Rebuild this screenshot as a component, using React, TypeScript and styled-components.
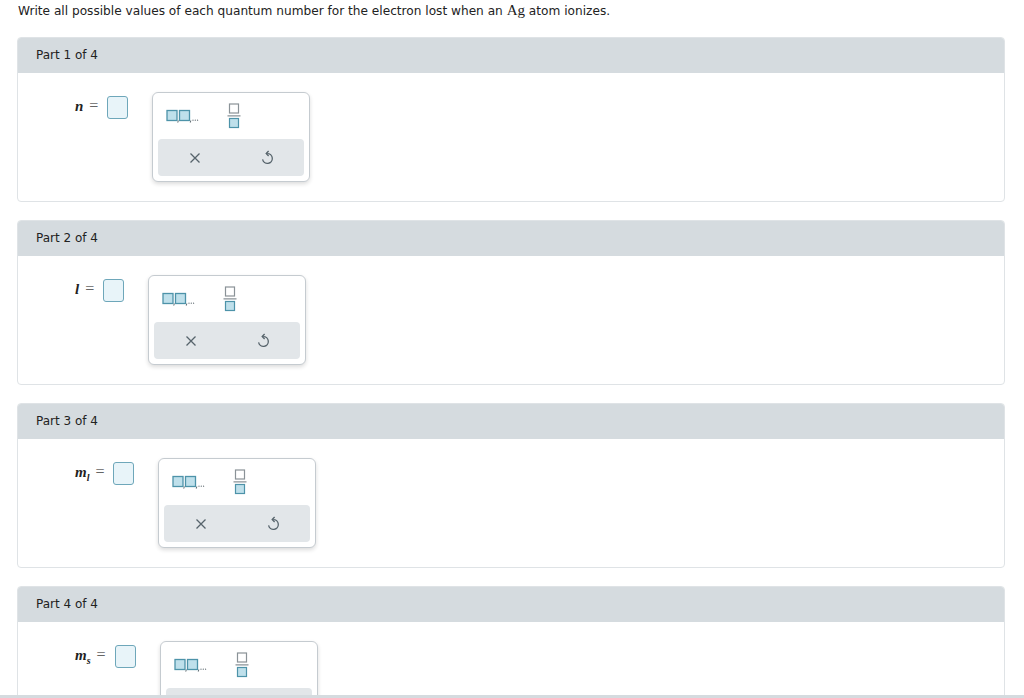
import styled, { createGlobalStyle } from "styled-components"

const GlobalStyle = createGlobalStyle`
  *, *::before, *::after {
    box-sizing: border-box;
  }
  body {
    margin: 0;
    background: #fff;
    font-family: "DejaVu Sans", Verdana, sans-serif;
    color: #333;
  }
`

const Page = styled.div`
  padding: 0 19px 0 17px;
`

const Prompt = styled.p`
  margin: 0;
  padding: 2px 0 0 1px;
  font-size: 12.15px;
  line-height: 16px;
  color: #222;
`

const Ag = styled.span`
  font-family: "Liberation Serif", "Times New Roman", serif;
  font-size: 15px;
`

const PartList = styled.div`
  display: flex;
  flex-direction: column;
  gap: 18px;
  margin-top: 18px;
`

const Card = styled.section`
  border: 1px solid #dfe3e6;
  border-radius: 4px;
  overflow: hidden;
`

const CardHeader = styled.div`
  height: 35px;
  background: #d5dbdf;
  display: flex;
  align-items: center;
  padding: 0 0 1px 18px;
  font-size: 12px;
  color: #222;
`

const CardBody = styled.div`
  height: 128px;
  padding: 19px 0 0 57px;
  display: flex;
  align-items: flex-start;
`

const Label = styled.span`
  display: flex;
  align-items: baseline;
  margin-top: 5px;
  font-family: "Liberation Serif", "Times New Roman", serif;
  font-size: 15px;
  color: #222;
`

const Var = styled.i`
  font-weight: bold;
  font-size: 15px;
`

const Sub = styled.i`
  font-size: 10px;
  font-weight: bold;
  position: relative;
  top: 4px;
`

const Eq = styled.span`
  margin: 0 9px 0 6px;
  color: #666;
  font-size: 16px;
`

const AnswerBox = styled.div`
  width: 21px;
  height: 23px;
  margin-top: 4px;
  border: 1.5px solid #6ea7ba;
  border-radius: 3px;
  background: #e8f4f9;
`

const Keypad = styled.div`
  width: 158px;
  height: 90px;
  margin-left: 24px;
  padding: 5px;
  border: 1px solid #c5cbd0;
  border-radius: 6px;
  box-shadow: 0 2px 4px rgba(0, 0, 0, 0.14);
  display: flex;
  flex-direction: column;
  background: #fff;
`

const KeyRow = styled.div`
  height: 41px;
  padding-bottom: 6px;
  display: grid;
  grid-template-columns: 50px 52px 1fr;
  align-items: center;
  justify-items: center;
`

const ActionRow = styled.div`
  flex: 1;
  background: #e2e6e9;
  border-radius: 4px;
  display: grid;
  grid-template-columns: 1fr 1fr;
  align-items: center;
  justify-items: center;
`

const ListIcon = () => (
  <svg width="34" height="14" viewBox="0 0 34 14">
    <rect x="1" y="1.5" width="10" height="10" fill="#bfe0eb" stroke="#4d93a9" strokeWidth="1.3" />
    <rect x="13.5" y="1.5" width="10" height="10" fill="#bfe0eb" stroke="#4d93a9" strokeWidth="1.3" />
    <path d="M12.3 11.5 L11.8 13.6 M24.8 11.5 L24.3 13.6" stroke="#4d5a62" strokeWidth="0.9" />
    <circle cx="27" cy="11.2" r="0.6" fill="#5a666d" />
    <circle cx="29.3" cy="11.2" r="0.6" fill="#5a666d" />
    <circle cx="31.6" cy="11.2" r="0.6" fill="#5a666d" />
  </svg>
)

const FracIcon = () => (
  <svg width="14" height="26" viewBox="0 0 14 26">
    <rect x="2.5" y="1" width="9" height="9" fill="#fff" stroke="#8a9297" strokeWidth="1.2" />
    <line x1="0.5" y1="12.8" x2="13.5" y2="12.8" stroke="#8a9297" strokeWidth="1.2" />
    <rect x="2.5" y="15.5" width="9" height="9" fill="#bfe0eb" stroke="#4d93a9" strokeWidth="1.2" />
  </svg>
)

const ClearIcon = () => (
  <svg width="12" height="12" viewBox="0 0 12 12">
    <path d="M1.5 1.5 L10.5 10.5 M10.5 1.5 L1.5 10.5" stroke="#56636b" strokeWidth="1.3" />
  </svg>
)

const UndoIcon = () => (
  <svg width="13" height="15" viewBox="0 0 13 15">
    <path d="M6.2 3.6 A4.9 4.9 0 1 1 1.6 9.4" fill="none" stroke="#56636b" strokeWidth="1.3" />
    <path d="M7.6 1 L5.2 3.6 L7.6 6" fill="none" stroke="#56636b" strokeWidth="1.3" />
  </svg>
)

const FooterLine = styled.div`
  position: fixed;
  left: 0;
  right: 0;
  bottom: 0;
  height: 3px;
  background: #d5dbdf;
`

const parts = [
  { v: "n", sub: "" },
  { v: "l", sub: "" },
  { v: "m", sub: "l" },
  { v: "m", sub: "s" },
]

export default function App() {
  return (
    <Page>
      <GlobalStyle />
      <Prompt>
        Write all possible values of each quantum number for the electron lost when an <Ag>Ag</Ag> atom ionizes.
      </Prompt>
      <PartList>
        {parts.map((p, i) => (
          <Card key={i}>
            <CardHeader>Part {i + 1} of 4</CardHeader>
            <CardBody>
              <Label>
                <Var>{p.v}</Var>
                {p.sub && <Sub>{p.sub}</Sub>}
                <Eq>=</Eq>
              </Label>
              <AnswerBox />
              <Keypad>
                <KeyRow>
                  <ListIcon />
                  <FracIcon />
                </KeyRow>
                <ActionRow>
                  <ClearIcon />
                  <UndoIcon />
                </ActionRow>
              </Keypad>
            </CardBody>
          </Card>
        ))}
      </PartList>
      <FooterLine />
    </Page>
  )
}
